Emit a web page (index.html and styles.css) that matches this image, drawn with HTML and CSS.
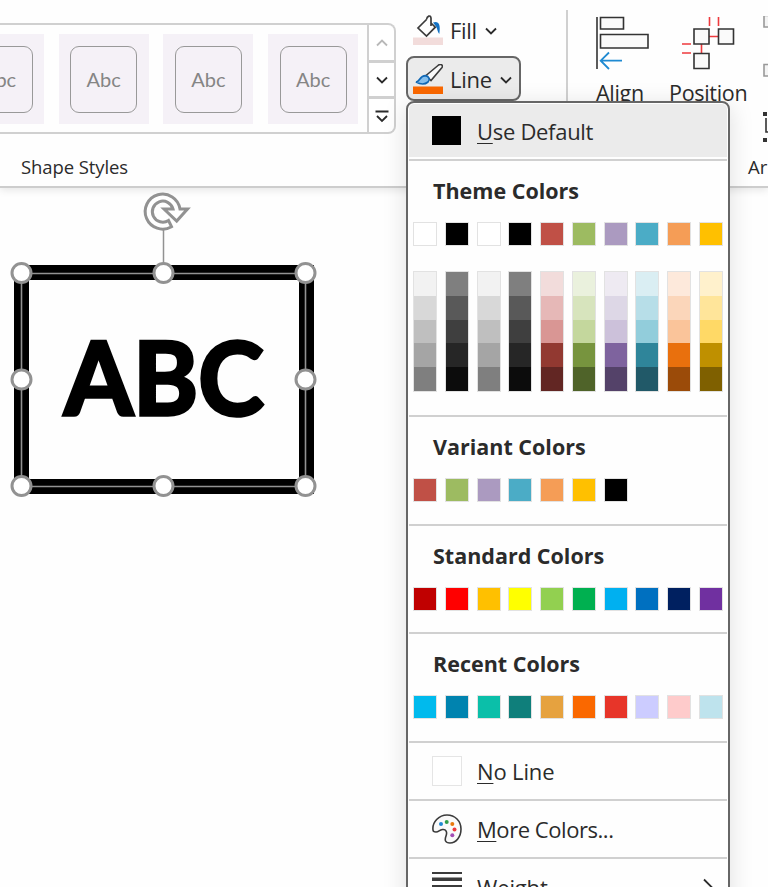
FILE: index.html
```html
<!DOCTYPE html>
<html lang="en">
<head>
    <meta charset="UTF-8">
    <meta name="viewport" content="width=device-width, initial-scale=1.0">
    <title>Shape Format</title>
    <link rel="stylesheet" href="styles.css">
</head>
<body>
    <div class="ribbon">
        <div class="styles-group">
            <div class="gallery">
                <div class="tiles">
                    <div class="tile"><span>Abc</span></div>
                    <div class="tile"><span>Abc</span></div>
                    <div class="tile"><span>Abc</span></div>
                    <div class="tile"><span>Abc</span></div>
                </div>
                <div class="scroller">
                    <div class="scroll-up"><svg width="12" height="8" viewBox="0 0 12 8"><path d="M1 6.500L6 1.500l5 5"/></svg></div>
                    <div><svg width="12" height="8" viewBox="0 0 12 8"><path d="M1 1.500l5 5 5-5"/></svg></div>
                    <div><svg width="14" height="13" viewBox="0 0 14 13"><path d="M.5 1.500h13M2 6l5 5 5-5"/></svg></div>
                </div>
            </div>
            <div class="group-label">Shape Styles</div>
        </div>

        <div class="tools">
            <button class="tool">
                <svg width="30" height="30" viewBox="0 0 30 30">
                    <rect y="22.500" width="30" height="7.500" fill="#f2dcdb"/>
                    <path d="M13.500 4.500L5 13l8.500 8 8.800-8.800-4.300-4.200M13.500 4.500C14 1 17.500-.5 18 3v8" fill="none" stroke="#3b3b3b" stroke-width="1.700"/>
                    <path d="M20 7.500c5-2 8 1 6.300 11.500-2-2-1.800-5.500-3.300-7.500z" fill="#1372c4"/>
                </svg>
                <span class="fill-text">Fill</span>
                <svg class="chevron" width="12" height="8" viewBox="0 0 12 8"><path d="M1 1.500l5 5 5-5"/></svg>
            </button>
            <button class="tool active">
                <svg width="30" height="30" viewBox="0 0 30 30">
                    <rect y="22.500" width="30" height="7.500" fill="#fa6800"/>
                    <path d="M13 11.500L25 1.500c2.500-2 5.500-.5 4 2L18 16.500z" fill="#fafafa" stroke="#3b3b3b" stroke-width="1.600"/>
                    <path d="M3 18c4 0 3.500-6.300 9.500-6.300 3.500.8 5 3.800 2.500 6.300-3 2.500-8 2.200-12 0z" fill="#83beec" stroke="#1068b5" stroke-width="1.700"/>
                </svg>
                <span>Line</span>
                <svg class="chevron" width="12" height="8" viewBox="0 0 12 8"><path d="M1 1.500l5 5 5-5"/></svg>
            </button>
        </div>

        <div class="divider"></div>

        <div class="arrange">
            <div class="big-tool align">
                <svg width="54" height="54" viewBox="0 0 54 54">
                    <path d="M1 1v52" stroke="#333" stroke-width="1.600"/>
                    <path d="M4.500 1.500h23v11.500h-23zM4.500 18.500h47.500V32h-47.500z" fill="#fafafa" stroke="#333" stroke-width="1.600"/>
                    <path d="M26 44.700H5M13 36.500L4.700 44.700 13 53" fill="none" stroke="#1f8ad2" stroke-width="1.800"/>
                </svg>
                <span>Align</span>
            </div>
            <div class="big-tool position">
                <svg width="54" height="54" viewBox="0 0 54 54">
                    <path d="M27.500 1v9M36.500 1v9M0 28h9M0 37h9M27 20.500h9M19.500 28v9" stroke="#ee3a3e" stroke-width="1.600"/>
                    <path d="M12 13h15v15H12zM36.500 13h15v15h-15zM12 37.500h15v15H12z" fill="#fafafa" stroke="#333" stroke-width="1.600"/>
                </svg>
                <span>Position</span>
            </div>
            <div class="more-tools">
                <svg width="14" height="130" viewBox="0 0 14 130">
                    <path d="M1 -.5h16v11.500H1zM1 48.500h16V60H1z" fill="#f4f4f4" stroke="#999" stroke-width="1.600"/>
                    <path d="M0 96h4v4H0zM0 122h4v4H0z" fill="#333"/>
                    <path d="M3 102v14h8" fill="none" stroke="#333" stroke-width="1.600"/>
                </svg>
                <span class="arrange-label">Arrange</span>
            </div>
        </div>
    </div>

    <div class="slide">
        <div class="shape"><span>ABC</span></div>
        <svg class="selection" width="320" height="320" viewBox="0 0 320 320">
            <g fill="none" stroke="#929292">
                <path d="M163.500 41v34" stroke-width="1.500"/>
                <path d="M21.500 85.500h284v213h-284z" stroke-width="1.600"/>
            </g>
            <path d="M180 21A17.500 17.500 0 1 0 171.500 38.700L168.500 32.500A10.500 10.500 0 1 1 173 21H164l12.700 12L187.500 21z" fill="#fff" stroke="#929292" stroke-width="3"/>
            <g fill="#fff" stroke="#929292" stroke-width="3">
                <circle cx="21.500" cy="85" r="9.500"/>
                <circle cx="163.500" cy="85" r="9.500"/>
                <circle cx="305.500" cy="85" r="9.500"/>
                <circle cx="21.500" cy="191.500" r="9.500"/>
                <circle cx="305.500" cy="191.500" r="9.500"/>
                <circle cx="21.500" cy="298" r="9.500"/>
                <circle cx="163.500" cy="298" r="9.500"/>
                <circle cx="305.500" cy="298" r="9.500"/>
            </g>
        </svg>
    </div>

    <div class="menu">
        <div class="item default"><i class="black-box"></i><span><u>U</u>se Default</span></div>
        <div class="section">
            <h2>Theme Colors</h2>
            <div class="swatches" data-colors="#ffffff #000000 #ffffff #000000 #c05046 #9dbb61 #ab9ac0 #4bacc6 #f59d56 #ffc000"></div>
            <div class="swatches tints" id="tints"></div>
        </div>
        <div class="section">
            <h2>Variant Colors</h2>
            <div class="swatches" data-colors="#c05046 #9dbb61 #ab9ac0 #4bacc6 #f59d56 #ffc000 #000000"></div>
        </div>
        <div class="section">
            <h2>Standard Colors</h2>
            <div class="swatches" data-colors="#c00000 #ff0000 #ffc000 #ffff00 #92d050 #00b050 #00b0f0 #0070c0 #002060 #7030a0"></div>
        </div>
        <div class="section">
            <h2>Recent Colors</h2>
            <div class="swatches" data-colors="#00baed #0083af #0bbfa9 #0f7f7b #e6a23f #fa6800 #e73529 #ccccff #fecbcb #bee3ed"></div>
        </div>
        <div class="item"><i class="empty-box"></i><span><u>N</u>o Line</span></div>
        <div class="item">
            <svg width="30" height="30" viewBox="0 0 30 30">
                <path d="M1 16C0 8 7 1 15 1c8 0 14 6 14 14 0 8-5 14-11 14-5 0-5.500-3-4-7 1.500-4 0-7-3.500-6.500C7 16 7 18 4 18c-2 0-3-.5-3-2z" fill="#fafafa" stroke="#3b3b3b" stroke-width="1.600"/>
                <circle cx="9" cy="10" r="2" fill="#1f8ad2"/>
                <circle cx="14.700" cy="8" r="2" fill="#309e4c"/>
                <circle cx="20.300" cy="10" r="2" fill="#e8780c"/>
                <circle cx="22.500" cy="15.500" r="2" fill="#ee3a3e"/>
                <circle cx="20.300" cy="21.300" r="2" fill="#a34db6"/>
            </svg>
            <span class="more-text"><u>M</u>ore Colors...</span>
        </div>
        <div class="item">
            <svg width="30" height="30" viewBox="0 0 30 30">
                <path d="M0 0h30v2H0zM0 5.500h30v3.500H0zM0 13h30v4H0zM0 21h30v6H0z" fill="#3b3b3b"/>
            </svg>
            <span><u>W</u>eight</span>
            <svg class="arrow" width="12" height="18" viewBox="0 0 12 18"><path d="M2 1.500L9.500 9 2 16.500"/></svg>
        </div>
    </div>

    <script>
        // shades under each theme color, lightest first
        const neutral = ['#f2f2f2', '#d8d8d8', '#bfbfbf', '#a5a5a5', '#7f7f7f'];
        const dark = ['#7f7f7f', '#595959', '#3f3f3f', '#262626', '#0c0c0c'];
        const tints = [
            neutral, dark, neutral, dark,
            ['#f2dcdb', '#e6b8b7', '#d99694', '#923931', '#622623'],
            ['#eaf1dd', '#d7e4bd', '#c4d79d', '#77943e', '#4f6329'],
            ['#eeeaf2', '#ddd7e6', '#ccc1da', '#7e639e', '#544269'],
            ['#daeef3', '#b7dee8', '#92cddb', '#2f859a', '#215968'],
            ['#fde9db', '#fbd6ba', '#fac49a', '#e9700d', '#9b4b09'],
            ['#fff1cc', '#ffe59a', '#ffd966', '#bf9000', '#7f6000']
        ];

        document.querySelectorAll('[data-colors]').forEach(row => {
            row.innerHTML = row.dataset.colors.split(' ')
                .map(c => `<div class="swatch" style="background-color: ${c}"></div>`).join('');
        });

        document.getElementById('tints').innerHTML = tints.map(column =>
            '<div class="column">' + column.map(c => `<div style="background-color: ${c}"></div>`).join('') + '</div>'
        ).join('');
    </script>
</body>
</html>
```
FILE: styles.css
```css
* {
    box-sizing: border-box;
}

html {
    overflow: hidden;
}

body {
    position: relative;
    width: 768px;
    height: 887px;
    margin: 0;
    overflow: hidden;
    background-color: #fefefe;
    font-family: "Open Sans", "Noto Sans", sans-serif;
    color: #2b2b2b;
}

svg {
    display: block;
    flex: none;
}

/* ribbon */
.ribbon {
    display: flex;
    height: 188px;
    border-bottom: 2px solid #cdcdcd;
    box-shadow: 0 2px 8px rgba(0, 0, 0, 0.1);
    background-color: #fefefe;
    overflow: hidden;
}

.styles-group {
    flex: none;
    width: 396px;
    padding-top: 23px;
}

.gallery {
    display: flex;
    height: 111px;
    border: 2px solid #d0d0d0;
    border-left: none;
    border-radius: 0 8px 8px 0;
    overflow: hidden;
}

.tiles {
    display: flex;
    justify-content: flex-end;
    gap: 14.7px;
    width: 368px;
    padding: 9px 9px 0 0;
    overflow: hidden;
}

.tile {
    display: flex;
    flex: none;
    align-items: center;
    justify-content: center;
    width: 90px;
    height: 90px;
    background-color: #f5f1f7;
}

.tile span {
    width: 67px;
    height: 67px;
    border: 1px solid #999;
    border-radius: 9px;
    font-family: Lato, sans-serif;
    font-size: 20px;
    line-height: 64px;
    text-align: center;
    color: #858585;
}

.scroller {
    display: grid;
    grid-template-rows: 35px 33px 34px;
    gap: 3px;
    width: 27px;
    border-left: 2px solid #d0d0d0;
    background-color: #d0d0d0;
}

.scroller div {
    display: flex;
    align-items: center;
    justify-content: center;
    background-color: #fff;
}

.scroller path,
.chevron path,
.arrow path {
    fill: none;
    stroke: #2b2b2b;
    stroke-width: 1.8;
}

.scroller .scroll-up path {
    stroke: #b8b8b8;
}

.group-label {
    padding: 19px 0 0 21px;
    font-size: 18.5px;
    line-height: 28px;
    letter-spacing: -0.1px;
}

.tools {
    display: flex;
    flex: none;
    flex-direction: column;
    gap: 5px;
    width: 115px;
    margin-left: 10px;
    padding-top: 8px;
}

.tool {
    display: flex;
    align-items: center;
    height: 43px;
    padding: 0 0 0 7px;
    border: none;
    background: none;
    font-family: inherit;
    font-size: 22px;
    color: #2b2b2b;
}

.tool span {
    margin-left: 7px;
    letter-spacing: -0.3px;
}

.tool .chevron {
    margin: 2px 0 0 8px;
}

.tool.active {
    height: 45px;
    padding-left: 5px;
    border: 2px solid #666;
    border-radius: 8px;
    background-color: #ebebeb;
}

.divider {
    flex: none;
    width: 2px;
    height: 150px;
    margin: 10px 0 0 45px;
    background-color: #d0d0d0;
}

.arrange {
    display: flex;
    padding-top: 16px;
}

.big-tool {
    display: flex;
    flex: none;
    flex-direction: column;
    gap: 7px;
    font-size: 21.5px;
    line-height: 32px;
    letter-spacing: -0.3px;
}

.align {
    width: 73px;
    margin-left: 28px;
}

.position {
    width: 79px;
}

.position svg {
    margin-left: 13px;
}

.more-tools {
    flex: none;
    width: 20px;
    white-space: nowrap;
}

.more-tools svg {
    margin-left: 15px;
}

.arrange-label {
    display: block;
    margin-top: 7px;
    font-size: 18.5px;
    line-height: 28px;
}

/* slide with the selected shape */
.slide {
    position: absolute;
    top: 188px;
    left: 0;
}

.shape {
    position: absolute;
    top: 77px;
    left: 14px;
    width: 300px;
    height: 229px;
    border: 15px solid #000;
    font-family: Lato, sans-serif;
    font-size: 102px;
    font-weight: 700;
    line-height: 192px;
    text-align: center;
    color: #000;
    -webkit-text-stroke: 3.5px #000;
}

.shape span {
    display: block;
    transform: scaleX(0.97);
}

.selection {
    position: absolute;
    top: 0;
    left: 0;
}

/* line color menu */
.menu {
    position: absolute;
    top: 101px;
    left: 406px;
    width: 324px;
    height: 830px;
    padding: 1px;
    border: 2px solid #666;
    border-radius: 8px;
    background-color: #fefefe;
    box-shadow: 0 4px 24px rgba(0, 0, 0, 0.13);
}

.item {
    display: flex;
    align-items: center;
    height: 58px;
    padding-left: 23px;
    border-top: 2px solid #d0d0d0;
    font-size: 22px;
    letter-spacing: -0.15px;
}

.item.default {
    height: 53px;
    margin-bottom: 2px;
    border-top: none;
    border-radius: 5px 5px 0 0;
    background-color: #ebebeb;
    letter-spacing: -0.3px;
}

.item span {
    margin-left: 15px;
}

.item .more-text {
    letter-spacing: -0.45px;
}

.item u {
    text-decoration-thickness: 1px;
    text-underline-offset: 3px;
}

.black-box,
.empty-box {
    width: 29px;
    height: 29px;
    background-color: #000;
}

.empty-box {
    width: 30px;
    height: 30px;
    border: 1px solid #e5e5e5;
    background-color: #fff;
}

.black-box + span {
    margin-left: 16px;
}

.item .arrow {
    margin: 0 13px 0 auto;
}

.section {
    padding: 0 4px 21.5px;
    border-top: 2px solid #d0d0d0;
}

.section h2 {
    height: 61px;
    margin: 0;
    padding-left: 20px;
    font-size: 21.5px;
    font-weight: 700;
    line-height: 59px;
}

.swatches {
    display: grid;
    grid-template-columns: repeat(10, 24px);
    justify-content: space-between;
    height: 24px;
}

.swatch,
.column {
    border: 1px solid #e2e2e2;
}

.tints {
    height: 122.5px;
    margin-top: 25px;
}

.column {
    display: grid;
    grid-template-rows: repeat(5, 1fr);
    height: 121px;
}
```
